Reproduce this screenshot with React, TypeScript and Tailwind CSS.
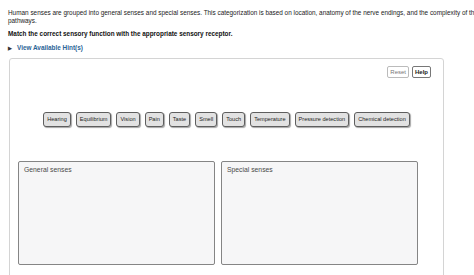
import React from 'react';

const senses = [
  'Hearing',
  'Equilibrium',
  'Vision',
  'Pain',
  'Taste',
  'Smell',
  'Touch',
  'Temperature',
  'Pressure detection',
  'Chemical detection',
];

const Chip: React.FC<{ label: string }> = ({ label }) => (
  <div className="flex h-[15px] items-center rounded-[3px] border border-[#5e5e5e] bg-[#e2e2e2] px-[3px] text-[5.6px] leading-none text-[#222] shadow-[1px_1px_1px_rgba(0,0,0,0.35)]">
    {label}
  </div>
);

const DropZone: React.FC<{ title: string; className?: string }> = ({ title, className }) => (
  <div
    className={`h-[104px] rounded-[2px] border border-[#858585] bg-[#f6f6f7] px-[5px] pt-[3px] text-[6.8px] leading-[9px] text-[#4a4a4a] ${className ?? ''}`}
  >
    {title}
  </div>
);

export default function App() {
  return (
    <div className="h-[275px] w-[474px] overflow-hidden bg-white font-['Liberation_Sans',Arial,sans-serif]">
      <div className="whitespace-nowrap pl-[8px] pt-[9px] text-[6.4px] leading-[8px] text-[#222]">
        <p>
          Human senses are grouped into general senses and special senses. This categorization is based on
          location, anatomy of the nerve endings, and the complexity of the neural
        </p>
        <p>pathways.</p>
      </div>
      <p className="mt-[5px] pl-[8px] text-[6.4px] font-bold leading-[8px] text-[#111]">
        Match the correct sensory function with the appropriate sensory receptor.
      </p>
      <div className="mt-[6px] flex items-center pl-[8px] text-[6.4px] font-bold leading-[8px] text-[#2a6496]">
        <span className="mr-[5px] text-[5px] text-[#333]">&#9654;</span>
        View Available Hint(s)
      </div>

      <div className="ml-[9px] mt-[6px] h-[230px] w-[435px] rounded-[3px] border border-[#d4d4d4] pt-[7px]">
        <div className="flex justify-end gap-[3px] pr-[12px]">
          <div className="flex h-[12px] items-center rounded-[2px] border border-[#bbb] bg-white px-[2px] text-[6px] text-[#777]">
            Reset
          </div>
          <div className="flex h-[12px] items-center rounded-[2px] border border-[#777] bg-white px-[2px] text-[6px] font-bold text-[#222]">
            Help
          </div>
        </div>

        <div className="mt-[34px] flex justify-center gap-[5px]">
          {senses.map((s) => (
            <Chip key={s} label={s} />
          ))}
        </div>

        <div className="mt-[34px] flex gap-[6px] pl-[8px]">
          <DropZone title="General senses" className="w-[197px]" />
          <DropZone title="Special senses" className="w-[197px]" />
        </div>
      </div>
    </div>
  );
}
